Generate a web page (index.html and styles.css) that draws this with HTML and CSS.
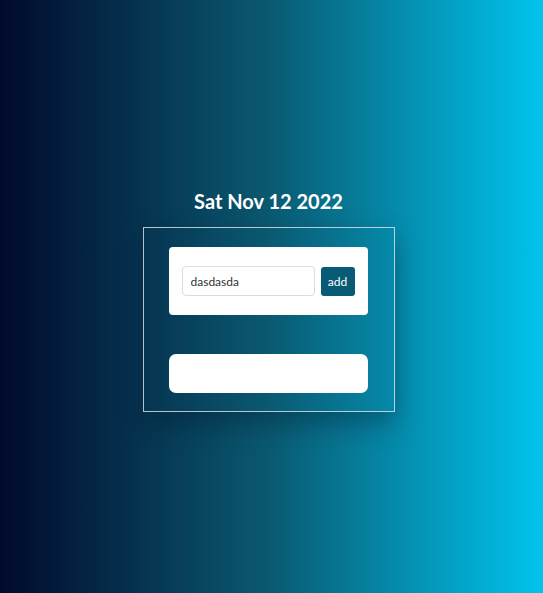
FILE: index.html
```html
<!DOCTYPE html>
<html>
<head>
<meta charset="utf-8">
<link rel="stylesheet" href="styles.css">
</head>
<body>
<main class="page">
  <h1 class="date">Sat Nov 12 2022</h1>
  <section class="box">
    <form class="card add-form">
      <input class="task-input" type="text" value="dasdasda">
      <button class="add-btn" type="button">add</button>
    </form>
    <div class="card list"></div>
  </section>
</main>
</body>
</html>
```
FILE: styles.css
```css
html, body {
  margin: 0;
  height: 100%;
}
body {
  background: linear-gradient(to right, #010a2c 0%, #0a5a72 50%, #00c4ee 100%);
  font-family: Lato, "Open Sans", "Liberation Sans", sans-serif;
}
.page {
  height: 100%;
  display: flex;
  flex-direction: column;
  align-items: center;
  padding: 187px 6px 0 0;
  box-sizing: border-box;
}
.date {
  margin: 0 0 12px;
  color: #fff;
  font-size: 20px;
  font-weight: 700;
  line-height: 28px;
}
.box {
  width: 252px;
  box-sizing: border-box;
  border: 1px solid rgba(225, 230, 235, 0.8);
  padding: 19px 26px 18px 25px;
  display: flex;
  flex-direction: column;
  gap: 39px;
  box-shadow: 0 12px 25px rgba(0, 20, 40, 0.35);
}
.card {
  background: #fff;
  border-radius: 4px;
}
.add-form {
  margin: 0;
  display: flex;
  align-items: center;
  gap: 6px;
  padding: 19px 13px;
}
.task-input {
  width: 133px;
  height: 30px;
  box-sizing: border-box;
  border: 1px solid #dcdcdc;
  border-radius: 4px;
  padding: 0 8px;
  font-family: Lato, "Open Sans", "Liberation Sans", sans-serif;
  font-size: 12px;
  color: #333;
  outline: none;
}
.add-btn {
  width: 34px;
  height: 29px;
  border: none;
  border-radius: 3px;
  background: #075b74;
  color: #fff;
  font-family: Lato, "Open Sans", "Liberation Sans", sans-serif;
  font-size: 12px;
  padding: 0;
}
.list {
  height: 39px;
  border-radius: 7px;
}
```
